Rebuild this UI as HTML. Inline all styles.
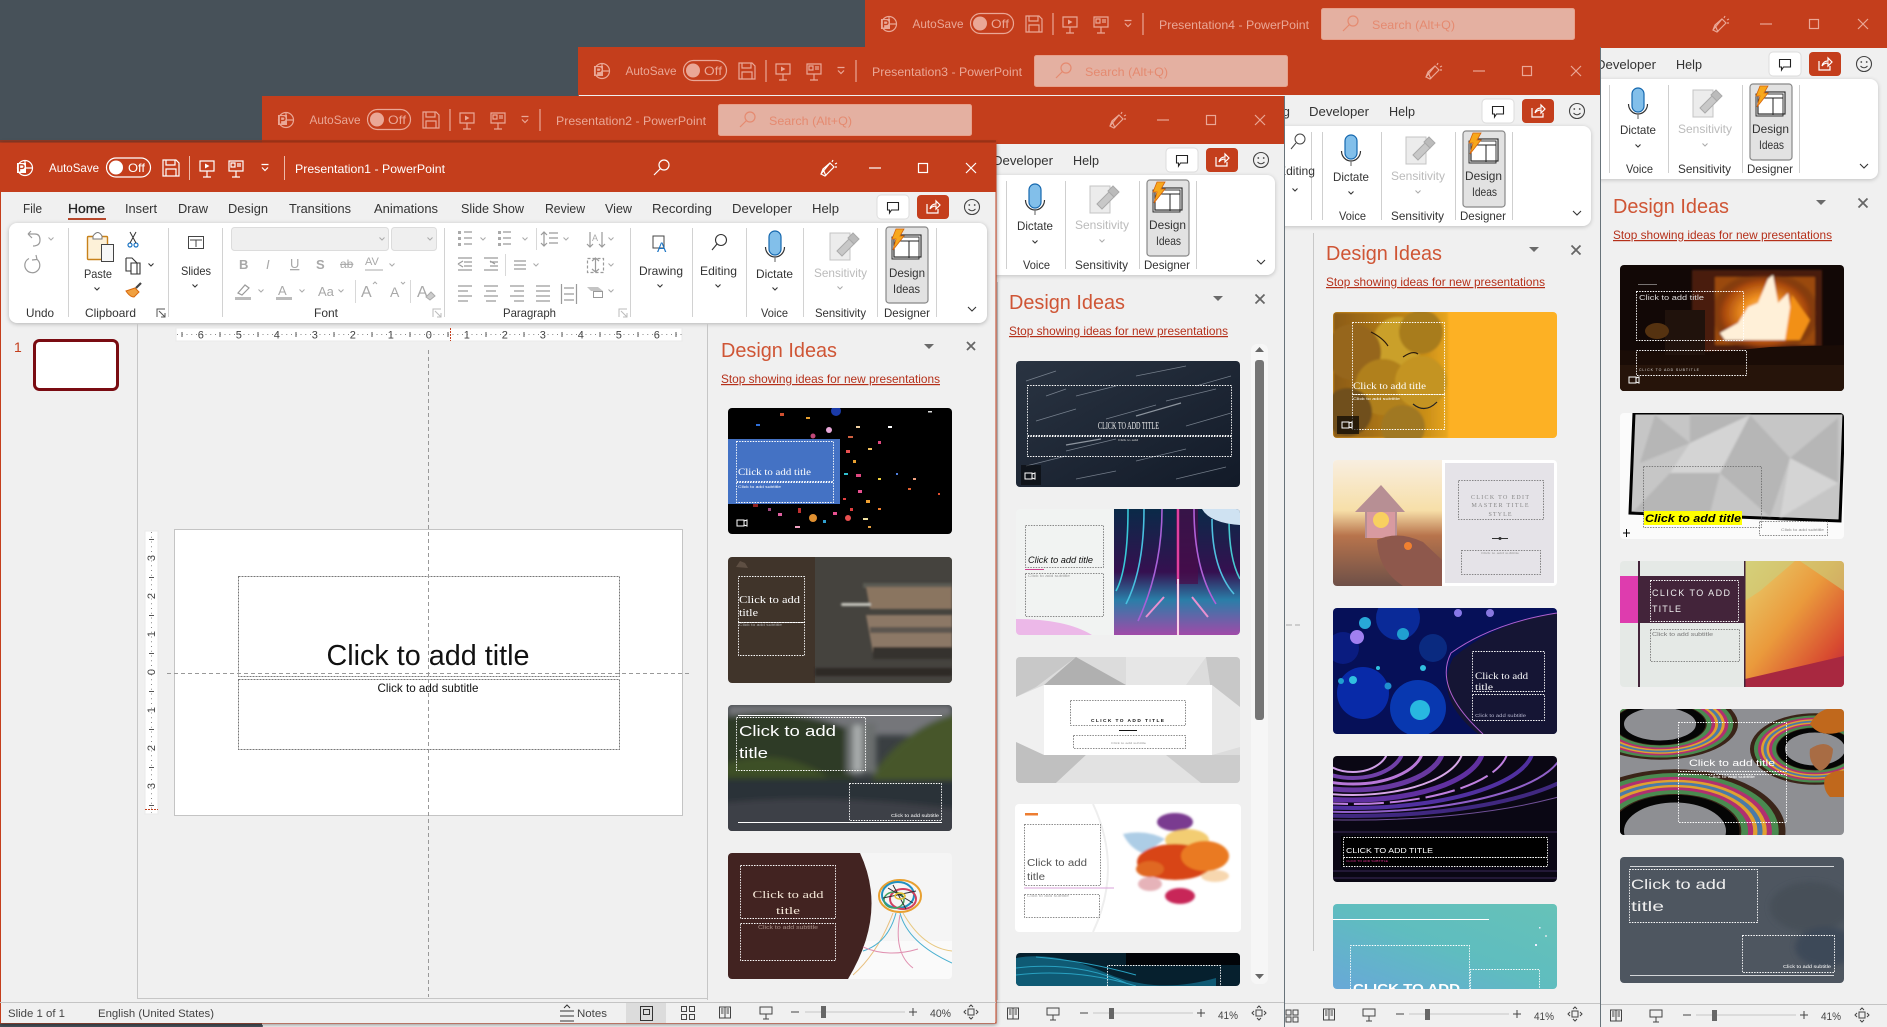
<!DOCTYPE html>
<html><head><meta charset="utf-8"><title>PowerPoint</title>
<style>
html,body{margin:0;padding:0;width:1887px;height:1027px;background:#475159;overflow:hidden}
svg{display:block;font-family:"Liberation Sans",sans-serif}
.i{fill:none;stroke:currentColor;stroke-width:1.2}
.g{fill:none;stroke:#9a9a9a;stroke-width:1.2}
.k{fill:none;stroke:#333;stroke-width:1.1}
.tab{font-size:13px;fill:#333}
.lab{font-size:12px;fill:#333}
.hd{font-size:20px;fill:#cf5535}
.lnk{font-size:12px;fill:#b5301a;text-decoration:underline}
.st{font-size:11px;fill:#444}
.tt{font-size:12px}
.ph{fill:none;stroke:#fff;stroke-width:.9;stroke-dasharray:1.5 1.2}
.pd{fill:none;stroke:#666;stroke-width:.8;stroke-dasharray:1.5 1.2}
.w{fill:#fff}
</style></head><body>
<svg width="1887" height="1027" viewBox="0 0 1887 1027" xmlns="http://www.w3.org/2000/svg">
<defs>
<filter id="b1" x="-20%" y="-20%" width="140%" height="140%"><feGaussianBlur stdDeviation="1"/></filter>
<filter id="b3" x="-20%" y="-20%" width="140%" height="140%"><feGaussianBlur stdDeviation="3"/></filter>
<clipPath id="tc"><rect width="224" height="126" rx="4"/></clipPath>
<clipPath id="tcs"><rect width="224" height="33" rx="4"/></clipPath>
<clipPath id="tcm"><rect width="224" height="85" rx="4"/></clipPath>
<clipPath id="tc2"><rect width="226" height="128" rx="4"/></clipPath>
<radialGradient id="fire" cx=".5" cy=".5" r=".5"><stop offset="0" stop-color="#ffd890"/><stop offset=".4" stop-color="#f09020"/><stop offset=".75" stop-color="#a8480c"/><stop offset="1" stop-color="#3a1505" stop-opacity="0"/></radialGradient>
<linearGradient id="neon" x1="0" y1="0" x2="0" y2="1"><stop offset="0" stop-color="#0a2a48"/><stop offset=".5" stop-color="#351050"/><stop offset=".72" stop-color="#2a7ea8"/><stop offset="1" stop-color="#a04aa8"/></linearGradient>
<linearGradient id="chalk" x1="0" y1="0" x2="1" y2="1"><stop offset="0" stop-color="#2a3442"/><stop offset="1" stop-color="#121a28"/></linearGradient>
<linearGradient id="teal" x1="0" y1="1" x2="1" y2="0"><stop offset="0" stop-color="#68a8d8"/><stop offset=".5" stop-color="#5fbdbf"/><stop offset="1" stop-color="#66c2b8"/></linearGradient>
<linearGradient id="paint" x1="0" y1="0" x2="1" y2="1"><stop offset="0" stop-color="#e8d070"/><stop offset=".45" stop-color="#ea9a3c"/><stop offset=".8" stop-color="#d84a30"/><stop offset="1" stop-color="#b82040"/></linearGradient>
<linearGradient id="sunset" x1="0" y1="0" x2="0" y2="1"><stop offset="0" stop-color="#f8eee0"/><stop offset=".4" stop-color="#f7dfa8"/><stop offset=".6" stop-color="#b8744c"/><stop offset="1" stop-color="#6e5048"/></linearGradient>
<linearGradient id="balls" x1="0" y1="0" x2="1" y2="0"><stop offset="0" stop-color="#8a5a16"/><stop offset=".8" stop-color="#c98e18"/><stop offset="1" stop-color="#e8a61e"/></linearGradient>

<g id="logo"><circle r="7.5" class="i" stroke-width="1.4"/><path d="M0-7.5V0H7.5" class="i"/><rect x="-8" y="-5" width="9" height="10" fill="currentColor"/><path d="M-5.5 3.5V-3.2H-3Q-1 -3.2 -1 -1.4T-3 .5H-5.5" fill="none" stroke="#c43e1c" stroke-width="1.3"/></g>
<g id="save"><path d="M-8-8H5L8-5V8H-8ZM-5-8V-3H4V-8M-5 8V1H5V8" class="i"/></g>
<g id="sh1"><path d="M-7-7H7V3H-7ZM0 3V9M-4 9H4M-7-7H7" class="i"/><path d="M-2-4.5L2.5-2-2 .5Z" fill="currentColor"/></g>
<g id="sh2"><path d="M-7-7H7V3H-7ZM0 3V9M-4 9H4M-5-5H-1V-1H-5ZM1-4H5M1-2H5" class="i"/></g>
<g id="qat"><path d="M-3.5-3.5H3.5M-3-.5L0 2.5 3-.5" class="i"/></g>
<g id="feat"><path d="M-7 6L-3 8 6-1 2-5ZM-7 6L-5 1 2-5M4-6L5-8M7-4L9-5M7-1H9M-5 1L-2 8" class="i"/></g>
<g id="srch"><circle cx="3" cy="-3" r="5" class="i"/><path d="M-.5.5L-7 7" class="i"/></g>
<g id="mn"><path d="M-6 0H6" class="i"/></g>
<g id="mx"><rect x="-4.5" y="-4.5" width="9" height="9" class="i"/></g>
<g id="cl"><path d="M-5-5L5 5M5-5L-5 5" class="i"/></g>
<g id="cmt"><rect x="-16" y="-12" width="32" height="24" rx="4" fill="#fff" stroke="#ddd"/><path d="M-5.500-4.5H5.500V3H-1.5L-3.500 6V3H-5.500Z" fill="none" stroke="#222" stroke-width="1.1"/></g>
<g id="shr"><rect x="-16" y="-12" width="32" height="24" rx="4" fill="#c43e1c"/><path d="M-6-3V6H5V2M-3 2Q-2-3 3-3V-6L7-2 3 2V-1Q-1-1-3 2" fill="none" stroke="#fff" stroke-width="1.2"/></g>
<g id="sml"><circle r="7.5" fill="none" stroke="#444" stroke-width="1.1"/><circle cx="-2.7" cy="-2" r=".9" fill="#444"/><circle cx="2.7" cy="-2" r=".9" fill="#444"/><path d="M-3.5 2Q0 5.5 3.5 2" fill="none" stroke="#444" stroke-width="1"/></g>
<g id="mic"><rect x="-6" y="0" width="12" height="24" rx="6" fill="#82bfea" stroke="#1467ae" stroke-width="1.2"/><path d="M-9.5 16A9.5 10 0 0 0 9.5 16" fill="none" stroke="#333" stroke-width="1.2"/><path d="M0 26V31" stroke="#777" stroke-width="1.2"/></g>
<g id="sns"><rect x="0" y="2" width="20" height="27" fill="#ececec" stroke="#c4c4c4"/><path d="M7 20L19 8 24 13 12 25Z" fill="#c8c8c8" stroke="#aaa"/><path d="M18 7L23 2 29 8 24 13Z" fill="#bbb" stroke="#aaa"/></g>
<g id="dsn"><rect x="-21" y="-38" width="42" height="76" rx="3" fill="#e2e2e2" stroke="#888" stroke-width="1.2"/><rect x="-13" y="-30" width="27" height="22" fill="#fff" stroke="#222" stroke-width="1.1"/><rect x="-15" y="-28" width="27" height="22" fill="none" stroke="#222" stroke-width=".9"/><path d="M-12-24H12M2-24V-7" stroke="#222" fill="none"/><path d="M-11-36H-3L-7-29H-3L-14-15-11-26H-15Z" fill="#f7a81c" stroke="#d7640c" stroke-width=".8"/></g>
<g id="chv"><path d="M-4-2L0 2 4-2" fill="none" stroke="#333" stroke-width="1.1"/></g>
<g id="cv2"><path d="M-2.5-1.5L0 1 2.5-1.5" fill="none" stroke="#333" stroke-width="1.1"/></g>
<g id="cvg"><path d="M-2.5-1.5L0 1 2.5-1.5" fill="none" stroke="#aaa" stroke-width="1"/></g>
<g id="bk"><path d="M0-5H5.5V6H0ZM0-5H-5.5V6H0M-4-3H-1.5M-4-1H-1.5M-4 1H-1.5M1.5-3H4M1.5-1H4M1.5 1H4" fill="none" stroke="#444" stroke-width="1"/></g>
<g id="ss"><path d="M-6-5H6V2H-6ZM0 2V7M-3 7H3" fill="none" stroke="#444" stroke-width="1"/></g>
<g id="ft"><path d="M-3-3H3V3H-3ZM-5-2L-7 0-5 2M5-2L7 0 5 2M-2-5L0-7 2-5M-2 5L0 7 2 5" fill="none" stroke="#444" stroke-width="1"/></g>
<g id="ring"><circle r="50" fill="none" stroke="#3a2418" stroke-width="30"/><circle r="50" fill="none" stroke="#4a8a50" stroke-width="22"/><circle r="50" fill="none" stroke="#b03070" stroke-width="14"/><circle r="50" fill="none" stroke="#e0a030" stroke-width="8"/><circle r="50" fill="none" stroke="#4a7aa8" stroke-width="3"/><circle r="34" fill="#8e8f93" stroke="#050505" stroke-width="8"/></g>

<g id="bw">
<rect width="1022" height="48" fill="#c43e1c"/>
<use href="#logo" x="24" y="24"/>
<rect x="105.500" y="13.500" width="43" height="20" rx="10" class="i"/><circle cx="115" cy="23.500" r="7" fill="currentColor"/>
<use href="#save" x="169" y="24"/><path d="M188 13V35M278 13V35" class="i"/>
<use href="#sh1" x="205" y="24"/><use href="#sh2" x="236" y="24"/><use href="#qat" x="263" y="24"/>
<rect x="456.500" y="8.500" width="253" height="31" rx="2" fill="#e4b0a1" stroke="#e7a08b"/>
<use href="#srch" x="485" y="24" color="#e58a70"/>
<use href="#feat" x="855" y="24"/><use href="#mn" x="901" y="24"/><use href="#mx" x="949" y="24"/><use href="#cl" x="998" y="24"/>
<use href="#cmt" x="920" y="64"/><use href="#shr" x="960" y="64"/><use href="#sml" x="999" y="64"/>
<rect x="9" y="79" width="1004" height="100" rx="8" fill="#fff" style="filter:drop-shadow(0 1px 2px rgba(0,0,0,.2))"/>
<path d="M744.500 85V173M803.500 85V173M877.500 85V173M934.500 85V173" stroke="#cfcfcf"/>
<use href="#mic" x="773" y="88"/><use href="#sns" x="828" y="88"/><use href="#dsn" x="906" y="122"/>
<use href="#chv" x="999" y="166"/><use href="#cv2" x="773" y="146"/><use href="#cvg" x="840" y="145"/><use href="#cv2" x="717" y="143"/>
<path d="M733.500 85V173" stroke="#cfcfcf"/>
<path d="M735.500 186V904" stroke="#c8c8c8"/>
<path d="M951 200H961L956 205Z" fill="#6a6a6a"/><path d="M993.500 198.500L1002.500 207.500M1002.500 198.500L993.500 207.500" stroke="#666" stroke-width="1.800"/>
</g>
<g id="bs">
<rect width="1022" height="23" fill="#f0f0f0"/><path d="M0 .5H1022" stroke="#c4c4c4"/>
<use href="#bk" x="751" y="11"/><use href="#ss" x="791" y="11"/>
<path d="M818 11H826M935 11H943M939 7V15" stroke="#444"/><path d="M831 11H931" stroke="#c6c6c6"/><rect x="847" y="6" width="5" height="11" fill="#666"/>
<use href="#ft" x="997" y="11"/>
</g>
</defs>

<rect width="1887" height="1027" fill="#475159"/>

<!-- WINDOW 4 -->
<g transform="translate(865,0)" color="#eaa796">
<rect x=".5" y="0" width="1022" height="1027" fill="#f0f0f0"/><path d="M.5 0V1027" stroke="#68737a"/>
<use href="#bw"/><use href="#bs" y="1004"/>
<g fill="#eaa796" class="tt">
<text x="47.500" y="28" textLength="51" lengthAdjust="spacingAndGlyphs">AutoSave</text>
<text x="126" y="28" textLength="18" lengthAdjust="spacingAndGlyphs">Off</text>
<text x="294" y="29" textLength="150" lengthAdjust="spacingAndGlyphs">Presentation4 - PowerPoint</text>
<text x="507" y="29" textLength="83" lengthAdjust="spacingAndGlyphs" fill="#e58a70">Search (Alt+Q)</text>
</g>
<text x="731" y="69" textLength="60" lengthAdjust="spacingAndGlyphs" class="tab">Developer</text>
<text x="811" y="69" textLength="26" lengthAdjust="spacingAndGlyphs" class="tab">Help</text>
<g class="lab"><text x="755" y="134" textLength="36" lengthAdjust="spacingAndGlyphs">Dictate</text>
<text x="813" y="133" textLength="54" lengthAdjust="spacingAndGlyphs" fill="#bbb">Sensitivity</text>
<text x="887" y="133" textLength="37" lengthAdjust="spacingAndGlyphs">Design</text><text x="894" y="149" textLength="25" lengthAdjust="spacingAndGlyphs">Ideas</text>
<text x="761" y="173" textLength="27" lengthAdjust="spacingAndGlyphs">Voice</text><text x="813" y="173" textLength="53" lengthAdjust="spacingAndGlyphs">Sensitivity</text><text x="882" y="173" textLength="46" lengthAdjust="spacingAndGlyphs">Designer</text></g>
<text x="748" y="213" textLength="116" lengthAdjust="spacingAndGlyphs" class="hd">Design Ideas</text>
<text x="748" y="239" textLength="219" lengthAdjust="spacingAndGlyphs" class="lnk">Stop showing ideas for new presentations</text>
<text x="956" y="1020" textLength="20" lengthAdjust="spacingAndGlyphs" class="st">41%</text>
</g>

<!-- WINDOW 3 -->
<g transform="translate(578,47)" color="#eaa796">
<rect x=".5" y="0" width="1022" height="980" fill="#f0f0f0"/><path d="M.5 0V980M1022.500 0V980" stroke="#68737a"/>
<use href="#bw"/><use href="#bs" y="956"/>
<g fill="#eaa796" class="tt">
<text x="47.500" y="28" textLength="51" lengthAdjust="spacingAndGlyphs">AutoSave</text>
<text x="126" y="28" textLength="18" lengthAdjust="spacingAndGlyphs">Off</text>
<text x="294" y="29" textLength="150" lengthAdjust="spacingAndGlyphs">Presentation3 - PowerPoint</text>
<text x="507" y="29" textLength="83" lengthAdjust="spacingAndGlyphs" fill="#e58a70">Search (Alt+Q)</text>
</g>
<text x="652" y="69" textLength="60" lengthAdjust="spacingAndGlyphs" class="tab">Recording</text>
<text x="731" y="69" textLength="60" lengthAdjust="spacingAndGlyphs" class="tab">Developer</text>
<text x="811" y="69" textLength="26" lengthAdjust="spacingAndGlyphs" class="tab">Help</text>
<g class="lab"><text x="700" y="128" textLength="37" lengthAdjust="spacingAndGlyphs">Editing</text>
<text x="755" y="134" textLength="36" lengthAdjust="spacingAndGlyphs">Dictate</text>
<text x="813" y="133" textLength="54" lengthAdjust="spacingAndGlyphs" fill="#bbb">Sensitivity</text>
<text x="887" y="133" textLength="37" lengthAdjust="spacingAndGlyphs">Design</text><text x="894" y="149" textLength="25" lengthAdjust="spacingAndGlyphs">Ideas</text>
<text x="761" y="173" textLength="27" lengthAdjust="spacingAndGlyphs">Voice</text><text x="813" y="173" textLength="53" lengthAdjust="spacingAndGlyphs">Sensitivity</text><text x="882" y="173" textLength="46" lengthAdjust="spacingAndGlyphs">Designer</text></g>
<circle cx="722" cy="92" r="5" fill="none" stroke="#444"/><path d="M718 96L713 102" stroke="#444"/>
<path d="M708 578H714M717 578H722" stroke="#aaa"/>
<text x="748" y="213" textLength="116" lengthAdjust="spacingAndGlyphs" class="hd">Design Ideas</text>
<text x="748" y="239" textLength="219" lengthAdjust="spacingAndGlyphs" class="lnk">Stop showing ideas for new presentations</text>
<path d="M708 963H713V968H708ZM715 963H720V968H715ZM708 970H713V975H708ZM715 970H720V975H715Z" fill="none" stroke="#444"/>
<text x="956" y="973" textLength="20" lengthAdjust="spacingAndGlyphs" class="st">41%</text>
</g>

<!-- WINDOW 2 -->
<g transform="translate(262,96)" color="#eaa796">
<rect x=".5" y="0" width="1022" height="931" fill="#f0f0f0"/><path d="M.5 0V931M1022.500 0V931" stroke="#68737a"/>
<use href="#bw"/><use href="#bs" y="906"/>
<g fill="#eaa796" class="tt">
<text x="47.500" y="28" textLength="51" lengthAdjust="spacingAndGlyphs">AutoSave</text>
<text x="126" y="28" textLength="18" lengthAdjust="spacingAndGlyphs">Off</text>
<text x="294" y="29" textLength="150" lengthAdjust="spacingAndGlyphs">Presentation2 - PowerPoint</text>
<text x="507" y="29" textLength="83" lengthAdjust="spacingAndGlyphs" fill="#e58a70">Search (Alt+Q)</text>
</g>
<text x="731" y="69" textLength="60" lengthAdjust="spacingAndGlyphs" class="tab">Developer</text>
<text x="811" y="69" textLength="26" lengthAdjust="spacingAndGlyphs" class="tab">Help</text>
<g class="lab"><text x="755" y="134" textLength="36" lengthAdjust="spacingAndGlyphs">Dictate</text>
<text x="813" y="133" textLength="54" lengthAdjust="spacingAndGlyphs" fill="#bbb">Sensitivity</text>
<text x="887" y="133" textLength="37" lengthAdjust="spacingAndGlyphs">Design</text><text x="894" y="149" textLength="25" lengthAdjust="spacingAndGlyphs">Ideas</text>
<text x="761" y="173" textLength="27" lengthAdjust="spacingAndGlyphs">Voice</text><text x="813" y="173" textLength="53" lengthAdjust="spacingAndGlyphs">Sensitivity</text><text x="882" y="173" textLength="46" lengthAdjust="spacingAndGlyphs">Designer</text></g>
<text x="747" y="213" textLength="116" lengthAdjust="spacingAndGlyphs" class="hd">Design Ideas</text>
<text x="747" y="239" textLength="219" lengthAdjust="spacingAndGlyphs" class="lnk">Stop showing ideas for new presentations</text>
<text x="956" y="923" textLength="20" lengthAdjust="spacingAndGlyphs" class="st">41%</text>
<rect x="989" y="248" width="17" height="640" rx="6" fill="#f6f6f6"/>
<rect x="993" y="264" width="9" height="360" rx="3" fill="#757575"/>
<path d="M997.500 251L1002 256H993Z" fill="#666"/><path d="M993 878H1002L997.500 883Z" fill="#666"/>
</g>

<!-- WINDOW 1 -->
<g>
<rect x="0" y="140" width="996" height="3" fill="#a03419" opacity=".8"/>
<rect x=".5" y="143" width="995.500" height="880" fill="#f0f0f0" stroke="#c43e1c" style="filter:drop-shadow(0 1px 2px rgba(0,0,0,.45))"/>
<rect x="0" y="143" width="996" height="49" fill="#c43e1c"/>
<g color="#fff">
<use href="#logo" x="25" y="168"/>
<text x="49" y="172" textLength="50" lengthAdjust="spacingAndGlyphs" fill="#fff" class="tt">AutoSave</text>
<rect x="106.500" y="158" width="44" height="19" rx="9.500" class="i"/><circle cx="116" cy="167.500" r="7" fill="#fff"/>
<text x="128" y="172" textLength="17" lengthAdjust="spacingAndGlyphs" fill="#fff" class="tt">Off</text>
<use href="#save" x="171" y="168"/>
<path d="M189.500 156V180M284.500 156V180" stroke="#eeb9a8"/>
<use href="#sh1" x="207" y="168"/><use href="#sh2" x="236" y="168"/><use href="#qat" x="265" y="168"/>
<text x="295" y="173" textLength="150" lengthAdjust="spacingAndGlyphs" fill="#fff" class="tt">Presentation1 - PowerPoint</text>
<use href="#srch" x="661" y="168"/><use href="#feat" x="828" y="168"/><use href="#mn" x="875" y="168"/><use href="#mx" x="923" y="168"/><use href="#cl" x="971" y="168"/>
</g>
<g class="tab">
<text x="23" y="213" textLength="19" lengthAdjust="spacingAndGlyphs">File</text>
<text x="68" y="213" textLength="37" lengthAdjust="spacingAndGlyphs" fill="#222" stroke="#222" stroke-width=".3">Home</text>
<text x="125" y="213" textLength="32" lengthAdjust="spacingAndGlyphs">Insert</text>
<text x="178" y="213" textLength="30" lengthAdjust="spacingAndGlyphs">Draw</text>
<text x="228" y="213" textLength="40" lengthAdjust="spacingAndGlyphs">Design</text>
<text x="289" y="213" textLength="62" lengthAdjust="spacingAndGlyphs">Transitions</text>
<text x="374" y="213" textLength="64" lengthAdjust="spacingAndGlyphs">Animations</text>
<text x="461" y="213" textLength="63" lengthAdjust="spacingAndGlyphs">Slide Show</text>
<text x="545" y="213" textLength="40" lengthAdjust="spacingAndGlyphs">Review</text>
<text x="605" y="213" textLength="27" lengthAdjust="spacingAndGlyphs">View</text>
<text x="652" y="213" textLength="60" lengthAdjust="spacingAndGlyphs">Recording</text>
<text x="732" y="213" textLength="60" lengthAdjust="spacingAndGlyphs">Developer</text>
<text x="812" y="213" textLength="27" lengthAdjust="spacingAndGlyphs">Help</text>
</g>
<rect x="68" y="218" width="38" height="2" fill="#b7472a"/>
<use href="#cmt" x="893" y="207"/><use href="#shr" x="933" y="207"/><use href="#sml" x="972" y="207"/>

<rect x="9" y="223" width="978" height="100" rx="8" fill="#fff" style="filter:drop-shadow(0 1px 2px rgba(0,0,0,.25))"/>
<path d="M68.500 228V317M168.500 228V317M222.500 228V317M444.500 228V317M630.500 228V317M692.500 228V317M746.500 228V317M803.500 228V317M877.500 228V317M936.500 228V317" stroke="#d2d2d2"/>
<!-- undo / redo -->
<path d="M28 234H35Q40 234 40 240T33 246M28 234L31 231M28 234L32 238" class="g"/><use href="#cvg" x="51" y="239"/>
<path d="M36.500 259A7.500 7.500 0 1 1 29 258.500M36 255L37 259.500 32 260" class="g"/>
<!-- clipboard -->
<rect x="87.500" y="236.500" width="20" height="23" rx="1" fill="#fdf1d8" stroke="#c8811a" stroke-width="1.400"/>
<path d="M93 236Q98 229 102 236V239H93Z" fill="#fff" stroke="#777"/>
<rect x="101.500" y="244.500" width="12" height="17" fill="#f7f7f7" stroke="#444"/>
<use href="#cv2" x="97" y="289"/>
<circle cx="130" cy="245" r="2" fill="none" stroke="#1b74c4" stroke-width="1.200"/><circle cx="136" cy="245" r="2" fill="none" stroke="#1b74c4" stroke-width="1.200"/><path d="M130 243L136 232M136 243L130 232" stroke="#333" stroke-width="1"/>
<path d="M126 258H132L137 263V274H131M126 258V271H131M131 263H140V274H131Z" class="k"/><use href="#cv2" x="151" y="265"/>
<path d="M126 291L135 288 139 292 134 297Q130 297 126 291Z" fill="#f0a040" stroke="#d7680c"/><path d="M136 288L141 283" stroke="#444" stroke-width="2.200"/>
<path d="M157 317V309H165M165 317L159 311M165 313V317H161" fill="none" stroke="#555"/>
<!-- slides -->
<rect x="188.500" y="236.500" width="15" height="12" fill="none" stroke="#444"/><path d="M190 240H202M196 240V247" stroke="#444"/>
<use href="#cv2" x="195" y="286"/>
<!-- font boxes -->
<rect x="231.500" y="227.500" width="157" height="23" rx="3" fill="#efefef" stroke="#dcdcdc"/>
<rect x="391.500" y="227.500" width="45" height="23" rx="3" fill="#efefef" stroke="#dcdcdc"/>
<use href="#cvg" x="382" y="239"/><use href="#cvg" x="430" y="239"/>
<g fill="#a8a8a8" font-size="13">
<text x="239" y="269" font-weight="bold">B</text><text x="266" y="269" font-style="italic">I</text><text x="290" y="268" text-decoration="underline">U</text><text x="316" y="269" font-weight="bold">S</text><text x="340" y="268" font-size="12" text-decoration="line-through">ab</text><text x="365" y="265" font-size="11">AV</text>
<text x="318" y="296" font-size="13">Aa</text><text x="361" y="297" font-size="16">A</text><text x="390" y="297" font-size="14">A</text><text x="417" y="297" font-size="16">A</text><text x="278" y="295" font-size="13">A</text>
</g>
<path d="M365 270H383M373 284L375 282 377 284M401 282L403 284 405 282" stroke="#aaa" fill="none"/><path d="M426 297L431 292 435 296 430 300Z" fill="#ccc" stroke="#aaa"/>
<use href="#cvg" x="392" y="265"/><use href="#cvg" x="261" y="291"/><use href="#cvg" x="302" y="291"/><use href="#cvg" x="341" y="291"/>
<rect x="235" y="297" width="16" height="3" fill="#bbb"/><rect x="276" y="297" width="16" height="3" fill="#bbb"/>
<path d="M238 293L245 285 249 288 242 295Z" class="g"/>
<path d="M355.500 280V303M410.500 280V303" stroke="#d8d8d8"/>
<!-- paragraph -->
<g class="g">
<path d="M464 232H472M464 238H472M464 244H472M503 232H511M503 238H511M503 244H511M549 233H558M549 238H558M549 243H558M544 232V246M541 235L544 232 547 235M541 243L544 246 547 243"/>
<path d="M458 258H472M464 262H472M464 266H472M458 270H472M484 258H498M490 262H498M490 266H498M484 270H498M514 261H526M514 265H526M514 269H526M458 264L463 261M458 264L463 267M495 264L490 261"/>
<path d="M458 286H472M458 291H468M458 296H472M458 301H468M484 286H498M486 291H496M484 296H498M486 301H496M510 286H524M514 291H524M510 296H524M514 301H524M536 286H550M536 291H550M536 296H550M536 301H550"/>
<path d="M561.500 284V304M576.500 284V304M564 288H574M564 294H574M564 300H574"/>
<path d="M587.500 258.500H603.500V272.500H587.500Z" stroke-dasharray="3 2"/><path d="M595.500 258V272M592 261L595.500 258 599 261M592 269L595.500 272 599 269"/>
<path d="M590 232V247M587 244L590 247 593 244M602 232V247M599 244L602 247 605 244"/>
</g>
<text x="592" y="241" font-size="9" fill="#aaa">A</text>
<path d="M587 287H598L603 291H591Z" fill="#c4c4c4"/><rect x="593.500" y="291.500" width="9" height="6" fill="#fff" stroke="#999"/>
<rect x="458" y="231" width="3" height="3" fill="#aaa"/><rect x="458" y="237" width="3" height="3" fill="#aaa"/><rect x="458" y="243" width="3" height="3" fill="#aaa"/>
<rect x="498" y="231" width="3" height="3" fill="#aaa"/><rect x="498" y="237" width="3" height="3" fill="#aaa"/><rect x="498" y="243" width="3" height="3" fill="#aaa"/>
<use href="#cvg" x="483" y="239"/><use href="#cvg" x="525" y="239"/><use href="#cvg" x="566" y="239"/><use href="#cvg" x="611" y="239"/><use href="#cvg" x="536" y="265"/><use href="#cvg" x="611" y="265"/><use href="#cvg" x="611" y="291"/>
<path d="M505.500 254V276M536.500 228V250" stroke="#d8d8d8"/>
<path d="M433 317V309H441M441 317L435 311M441 313V317H437M619 317V309H627M627 317L621 311M627 313V317H623" fill="none" stroke="#bbb"/>
<path d="M653 236H664V248H653Z" fill="#fff" stroke="#444"/><text x="657" y="252" font-size="14" fill="#1b74c4">A</text>
<use href="#cv2" x="660" y="286"/><use href="#cv2" x="718" y="286"/>
<circle cx="721" cy="240" r="5.500" class="k"/><path d="M717 244L712 250" class="k"/>
<use href="#mic" x="775" y="231"/><use href="#cv2" x="775" y="289"/>
<use href="#sns" x="830" y="231"/><use href="#cvg" x="840" y="288"/>
<use href="#dsn" x="907" y="265"/><use href="#chv" x="972" y="309"/>
<g class="lab">
<text x="84" y="278" textLength="28" lengthAdjust="spacingAndGlyphs">Paste</text>
<text x="181" y="275" textLength="30" lengthAdjust="spacingAndGlyphs">Slides</text>
<text x="639" y="275" textLength="44" lengthAdjust="spacingAndGlyphs">Drawing</text>
<text x="700" y="275" textLength="37" lengthAdjust="spacingAndGlyphs">Editing</text>
<text x="756" y="278" textLength="37" lengthAdjust="spacingAndGlyphs">Dictate</text>
<text x="814" y="277" textLength="53" lengthAdjust="spacingAndGlyphs" fill="#bbb">Sensitivity</text>
<text x="889" y="277" textLength="36" lengthAdjust="spacingAndGlyphs">Design</text>
<text x="893" y="293" textLength="27" lengthAdjust="spacingAndGlyphs">Ideas</text>
<text x="26" y="317" textLength="28" lengthAdjust="spacingAndGlyphs">Undo</text>
<text x="85" y="317" textLength="51" lengthAdjust="spacingAndGlyphs">Clipboard</text>
<text x="314" y="317" textLength="24" lengthAdjust="spacingAndGlyphs">Font</text>
<text x="503" y="317" textLength="53" lengthAdjust="spacingAndGlyphs">Paragraph</text>
<text x="761" y="317" textLength="27" lengthAdjust="spacingAndGlyphs">Voice</text>
<text x="815" y="317" textLength="51" lengthAdjust="spacingAndGlyphs">Sensitivity</text>
<text x="884" y="317" textLength="46" lengthAdjust="spacingAndGlyphs">Designer</text>
</g>

<!-- panes -->
<path d="M137.500 324V998M707.500 324V1000" stroke="#c6c6c6"/><path d="M137 998.500H708" stroke="#c6c6c6"/>
<text x="14" y="352" font-size="14" fill="#c43e1c">1</text>
<rect x="34.500" y="340.500" width="83" height="49" rx="5" fill="#fff" stroke="#7a0c12" stroke-width="3"/>

<!-- h ruler -->
<rect x="176" y="328" width="506" height="13" fill="#fff" stroke="#eaeaea"/>
<path d="M177 334.500H682" stroke="#888" stroke-width="1" stroke-dasharray="1 3.750"/>
<path d="M181.500 334.500H682" stroke="#555" stroke-width="5" stroke-dasharray="1 37"/>
<g font-size="11" fill="#444" text-anchor="middle">
<text x="200.800" y="338.500">6</text><text x="238.800" y="338.500">5</text><text x="276.800" y="338.500">4</text><text x="314.800" y="338.500">3</text><text x="352.800" y="338.500">2</text><text x="390.800" y="338.500">1</text><text x="428.800" y="338.500">0</text><text x="466.800" y="338.500">1</text><text x="504.800" y="338.500">2</text><text x="542.800" y="338.500">3</text><text x="580.800" y="338.500">4</text><text x="618.800" y="338.500">5</text><text x="656.800" y="338.500">6</text>
</g>
<path d="M450.500 328V341" stroke="#c43e1c" stroke-dasharray="2 1"/>
<!-- v ruler -->
<rect x="145" y="531" width="13" height="283" fill="#fff" stroke="#eaeaea"/>
<path d="M151.500 532V813" stroke="#888" stroke-dasharray="1 3.750"/>
<path d="M151.500 539V813" stroke="#555" stroke-width="5" stroke-dasharray="1 37"/>
<g font-size="11" fill="#444" text-anchor="middle">
<text transform="translate(155,558) rotate(-90)">3</text><text transform="translate(155,596) rotate(-90)">2</text><text transform="translate(155,634) rotate(-90)">1</text><text transform="translate(155,672) rotate(-90)">0</text><text transform="translate(155,710) rotate(-90)">1</text><text transform="translate(155,748) rotate(-90)">2</text><text transform="translate(155,786) rotate(-90)">3</text>
</g>
<path d="M145 809.500H158" stroke="#c43e1c" stroke-dasharray="2 1"/>

<!-- slide -->
<rect x="174.500" y="529.500" width="508" height="286" fill="#fff" stroke="#c4c4c4"/>
<rect x="238.500" y="576.500" width="381" height="100" fill="none" stroke="#777" stroke-dasharray="2 1"/>
<rect x="238.500" y="679.500" width="381" height="70" fill="none" stroke="#777" stroke-dasharray="2 1"/>
<text x="428" y="665" text-anchor="middle" font-size="29" fill="#111" textLength="203" lengthAdjust="spacingAndGlyphs">Click to add title</text>
<text x="428" y="692" text-anchor="middle" font-size="12" fill="#111" textLength="101" lengthAdjust="spacingAndGlyphs">Click to add subtitle</text>
<path d="M428.500 350V997" stroke="#999" stroke-dasharray="4 3"/>
<path d="M167 673.500H690" stroke="#999" stroke-dasharray="4 3"/>

<!-- design pane -->
<text x="721" y="357" textLength="116" lengthAdjust="spacingAndGlyphs" class="hd">Design Ideas</text>
<text x="721" y="383" textLength="219" lengthAdjust="spacingAndGlyphs" class="lnk">Stop showing ideas for new presentations</text>
<path d="M924 344H934L929 349Z" fill="#6a6a6a"/><path d="M967 342L975 350M975 342L967 350" stroke="#666" stroke-width="1.800"/>

<!-- status 1 -->
<rect x="1" y="1002" width="994" height="21" fill="#f0f0f0"/><path d="M0 1002.500H996" stroke="#c4c4c4"/>
<rect x="626" y="1003" width="40" height="20" fill="#dcdcdc"/>
<g class="st">
<text x="8" y="1017" textLength="57" lengthAdjust="spacingAndGlyphs">Slide 1 of 1</text>
<text x="98" y="1017" textLength="116" lengthAdjust="spacingAndGlyphs">English (United States)</text>
<text x="577" y="1017" textLength="30" lengthAdjust="spacingAndGlyphs">Notes</text>
<text x="930" y="1017" textLength="21" lengthAdjust="spacingAndGlyphs">40%</text>
</g>
<path d="M560 1011H574M560 1016H574M560 1021H574M564 1008L567 1005 570 1008" fill="none" stroke="#333"/>
<rect x="640.500" y="1006.500" width="12" height="14" fill="none" stroke="#333"/><rect x="643.500" y="1009.500" width="6" height="5" fill="none" stroke="#333"/>
<path d="M681.500 1006.500H686.500V1011.500H681.500ZM689.500 1006.500H694.500V1011.500H689.500ZM681.500 1014.500H686.500V1019.500H681.500ZM689.500 1014.500H694.500V1019.500H689.500Z" fill="none" stroke="#444"/>
<use href="#bk" x="725" y="1012"/><use href="#ss" x="766" y="1012"/>
<path d="M791 1012H799M909 1012H917M913 1008V1016" stroke="#444"/><path d="M805 1012H905" stroke="#c6c6c6"/><rect x="821" y="1006" width="5" height="12" fill="#666"/>
<use href="#ft" x="971" y="1012"/>
</g>

<!-- THUMBS: WINDOW 1 -->
<svg x="728" y="408" width="224" height="126"><g clip-path="url(#tc)">
<rect width="224" height="126" fill="#000"/>
<g><circle cx="108" cy="3" r="5" fill="#1a3aa8"/><circle cx="101" cy="22" r="3" fill="#e8a8d8"/><circle cx="85" cy="28" r="2.500" fill="#c04878"/><rect x="52" y="5" width="4" height="3" fill="#d05030"/><rect x="78" y="9" width="4" height="2" fill="#e8a030"/><rect x="28" y="16" width="4" height="2" fill="#3070d8"/><rect x="120" y="28" width="5" height="2" fill="#d06040"/><rect x="128" y="18" width="4" height="2" fill="#f0d0a0"/><rect x="118" y="42" width="4" height="3" fill="#e85050"/><rect x="125" y="52" width="3" height="3" fill="#e8a030"/><rect x="116" y="65" width="4" height="2" fill="#30c0d0"/><rect x="128" y="66" width="5" height="3" fill="#e04880"/><rect x="140" y="40" width="4" height="2" fill="#f0c060"/><rect x="150" y="33" width="3" height="3" fill="#e04880"/><rect x="160" y="18" width="4" height="2" fill="#fff"/><rect x="150" y="70" width="3" height="2" fill="#f0d040"/><rect x="115" y="90" width="3" height="2" fill="#e04040"/><rect x="130" y="82" width="4" height="3" fill="#e85090"/><rect x="138" y="92" width="4" height="3" fill="#f0a030"/><rect x="122" y="100" width="3" height="3" fill="#e04040"/><rect x="105" y="104" width="4" height="3" fill="#e85090"/><circle cx="85" cy="110" r="4" fill="#e09030"/><rect x="70" y="100" width="3" height="5" fill="#c03030"/><circle cx="120" cy="110" r="3" fill="#e85050"/><rect x="135" y="110" width="5" height="2" fill="#f0e0a0"/><rect x="95" y="112" width="3" height="3" fill="#30a0d0"/><rect x="50" y="105" width="4" height="3" fill="#e060a0"/><rect x="40" y="100" width="3" height="3" fill="#a04880"/><rect x="150" y="100" width="3" height="2" fill="#f08030"/><rect x="140" y="118" width="3" height="2" fill="#e8a040"/><rect x="67" y="118" width="5" height="2" fill="#f0a0c0"/><rect x="180" y="80" width="3" height="2" fill="#e06030"/><rect x="185" y="70" width="3" height="2" fill="#f0a080"/><rect x="168" y="65" width="2" height="2" fill="#5080e0"/><rect x="210" y="85" width="2" height="2" fill="#e05030"/><rect x="200" y="3" width="4" height="1.500" fill="#ddd"/><rect x="25" y="95" width="5" height="4" fill="#902020"/></g>
<rect y="31" width="112" height="65" fill="#4472c4"/>
<rect x="8.500" y="33.500" width="97" height="40" class="ph"/><rect x="8.500" y="74.500" width="97" height="20" class="ph"/>
<text x="10" y="67" font-family="Liberation Serif" font-size="9.500" class="w" textLength="73" lengthAdjust="spacingAndGlyphs">Click to add title</text>
<text x="10" y="80" font-size="4" class="w" textLength="43" lengthAdjust="spacingAndGlyphs">Click to add subtitle</text>
<rect x="9" y="112" width="7" height="6" fill="none" stroke="#fff"/><path d="M16 113L19 112V118L16 117" fill="none" stroke="#fff"/>
</g></svg>

<svg x="728" y="557" width="224" height="126"><g clip-path="url(#tc)">
<rect width="224" height="126" fill="#40342a"/>
<rect x="87" width="137" height="126" fill="#45433e"/>
<g filter="url(#b1)">
<path d="M135 26H224V31H135Z" fill="#5a5a52"/><path d="M138 30H224V52H142Z" fill="#8a7560"/>
<path d="M138 58H224V96H145Z" fill="#8c7866"/><path d="M142 70H224V76H142Z" fill="#5d5650"/><path d="M145 90H224V102H145Z" fill="#34322e"/>
<rect x="113" y="46" width="30" height="3" fill="#c8c8c0" rx="2"/>
<path d="M87 115H224" stroke="#2e2c28" stroke-width="8"/>
</g>
<path d="M8 10L12 4 17 6 20 11Z" fill="#5e4f43"/>
<rect x="10.500" y="19.500" width="66" height="46" class="ph"/><rect x="10.500" y="65.500" width="66" height="33" class="ph"/>
<text x="11" y="46" font-family="Liberation Serif" font-size="11" class="w" textLength="61" lengthAdjust="spacingAndGlyphs">Click to add</text>
<text x="11" y="59" font-family="Liberation Serif" font-size="11" class="w" textLength="19" lengthAdjust="spacingAndGlyphs">title</text>
<text x="11" y="69" font-size="4" fill="#aaa" textLength="43" lengthAdjust="spacingAndGlyphs">Click to add subtitle</text>
</g></svg>

<svg x="728" y="705" width="224" height="126"><g clip-path="url(#tc)">
<rect width="224" height="126" fill="#3a3f42"/>
<g filter="url(#b3)">
<rect width="224" height="30" fill="#74767a"/>
<path d="M-5 12Q60 0 125 25V78H-5Z" fill="#2f3a28"/>
<path d="M-5 60Q50 40 100 72H-5Z" fill="#3e5028"/>
<path d="M145 68Q180 20 230 8V75H145Z" fill="#47572c"/>
<rect x="118" y="18" width="30" height="50" fill="#6c7070"/><rect x="125" y="20" width="9" height="48" fill="#a8acac"/>
<rect x="-5" y="75" width="234" height="55" fill="#2c3238"/><path d="M-5 98Q100 88 229 104V130H-5Z" fill="#3c4146"/>
</g>
<path d="M10 10.500H214M10 117.500H214" stroke="#fff"/>
<rect x="8.500" y="12.500" width="129" height="53" class="ph"/><rect x="121.500" y="78.500" width="92" height="37" class="ph"/>
<text x="11" y="31" font-size="15" class="w" textLength="97" lengthAdjust="spacingAndGlyphs">Click to add</text>
<text x="11" y="53" font-size="15" class="w" textLength="29" lengthAdjust="spacingAndGlyphs">title</text>
<text x="163" y="112" font-size="4.500" class="w" textLength="48" lengthAdjust="spacingAndGlyphs">Click to add subtitle</text>
</g></svg>

<svg x="728" y="853" width="224" height="126"><g clip-path="url(#tc)">
<rect width="224" height="126" fill="#f5f5f5"/><rect y="88" width="224" height="38" fill="#fafafa"/>
<path d="M0 0H132Q160 60 120 126H0Z" fill="#422321"/>
<g fill="none" stroke-width="1">
<ellipse cx="172" cy="43" rx="21" ry="16" stroke="#e8a030" stroke-width="2"/><ellipse cx="170" cy="42" rx="16" ry="13" stroke="#2090c0" stroke-width="2"/><ellipse cx="175" cy="46" rx="13" ry="10" stroke="#d04060" stroke-width="2"/><ellipse cx="166" cy="47" rx="10" ry="8" stroke="#40a060" stroke-width="1.500"/><path d="M160 35L185 50M155 45L188 38M165 32L178 56" stroke="#303030"/><ellipse cx="172" cy="43" rx="5" ry="3" stroke="#e8c030" stroke-width="1.500"/>
<path d="M165 60Q150 100 125 122" stroke="#e8c080"/><path d="M172 60Q180 90 224 110" stroke="#4ab0d0"/><path d="M175 60Q195 95 224 98" stroke="#e8c880"/><path d="M168 60Q160 90 135 98" stroke="#4ab0d0"/><path d="M172 62Q165 100 185 115" stroke="#e090b0"/><path d="M135 94Q160 105 190 96" stroke="#e090b0"/>
</g>
<rect x="12.500" y="12.500" width="95" height="53" class="ph"/><rect x="12.500" y="70.500" width="95" height="37" class="ph"/>
<text x="60" y="45" text-anchor="middle" font-family="Liberation Serif" font-size="10.500" fill="#f5e8d8" textLength="71" lengthAdjust="spacingAndGlyphs">Click to add</text>
<text x="60" y="61" text-anchor="middle" font-family="Liberation Serif" font-size="10.500" fill="#f5e8d8" textLength="24" lengthAdjust="spacingAndGlyphs">title</text>
<text x="60" y="76" text-anchor="middle" font-size="5" fill="#a89088" textLength="60" lengthAdjust="spacingAndGlyphs">Click to add subtitle</text>
</g></svg>

<!-- THUMBS: WINDOW 2 -->
<svg x="1016" y="361" width="224" height="126"><g clip-path="url(#tc)">
<rect width="224" height="126" fill="url(#chalk)"/>
<g stroke="#aeb8c4" stroke-width=".7" opacity=".6"><path d="M10 20L40 10M60 35L100 25M120 15L170 5M150 40L200 28M20 60L60 48M90 58L140 44M170 65L215 52M50 90L100 78M10 105L50 95M120 100L170 88M160 118L210 106M60 118L100 110M180 25L215 15M30 35L50 28"/></g>
<path d="M50 84L85 78M120 55L165 42" stroke="#d6dde4" stroke-width="1.200" opacity=".6"/>
<rect x="11.500" y="24.500" width="204" height="50" class="ph"/><rect x="11.500" y="75.500" width="204" height="20" class="ph"/>
<text x="82" y="68" font-family="Liberation Serif" font-size="10" fill="#eee" textLength="61" lengthAdjust="spacingAndGlyphs">CLICK TO ADD TITLE</text>
<text x="102" y="80" font-size="3" fill="#ccc" textLength="20" lengthAdjust="spacingAndGlyphs">Click to add</text>
<rect x="5" y="104" width="20" height="20" fill="#000" opacity=".5"/><rect x="9" y="112" width="7" height="6" fill="none" stroke="#fff"/><path d="M16 113L19 112V118L16 117" fill="none" stroke="#fff"/>
</g></svg>

<svg x="1016" y="509" width="224" height="126"><g clip-path="url(#tc)">
<rect width="224" height="126" fill="#f1f3f2"/>
<rect x="98" width="126" height="126" fill="url(#neon)"/>
<rect x="160" width="22" height="75" fill="#4a0c48" opacity=".7"/>
<g fill="none" stroke-width="1.600">
<path d="M112 0Q112 60 100 82" stroke="#38c8d8"/><path d="M128 0Q128 60 110 95" stroke="#48c0e0"/><path d="M146 0Q146 60 122 112" stroke="#a860d8"/><path d="M162 0V126" stroke="#e040a0" stroke-width="2.400"/>
<path d="M178 0Q178 60 200 95" stroke="#b060d8"/><path d="M196 10Q196 60 218 85" stroke="#50c0e0"/><path d="M213 10Q213 50 224 70" stroke="#48c8d0"/>
<path d="M148 88L130 108M176 88L192 108" stroke="#e890d0" stroke-width="2"/>
<path d="M162 70V126" stroke="#fff" stroke-width="1.500"/>
</g>
<path d="M186 0Q194 14 224 16V0Z" fill="#cfe2f2"/>
<path d="M0 110Q50 110 76 126H0Z" fill="#ecb8e8"/>
<rect x="9.500" y="16.500" width="78" height="42" class="pd"/><rect x="9.500" y="64.500" width="78" height="43" class="pd"/>
<text x="12" y="54" font-style="italic" font-size="9" fill="#111" textLength="65" lengthAdjust="spacingAndGlyphs">Click to add title</text>
<path d="M9 60.500H28" stroke="#d04090"/>
<text x="12" y="68" font-size="3.800" fill="#999" textLength="42" lengthAdjust="spacingAndGlyphs">Click to add subtitle</text>
</g></svg>

<svg x="1016" y="657" width="224" height="126"><g clip-path="url(#tc)">
<rect width="224" height="126" fill="#dcdcdc"/>
<path d="M0 0H60L20 30 0 40Z" fill="#c8c8c8"/><path d="M60 0L110 28H28Z" fill="#b0b0b0"/><path d="M110 0H190L170 28H110Z" fill="#e6e6e6"/><path d="M190 0H224V50L196 40Z" fill="#c8c8c8"/>
<path d="M0 40L28 28V98L0 85Z" fill="#f0f0f0"/><path d="M196 28L224 50V90L196 98Z" fill="#e8e8e8"/>
<path d="M0 85L28 98H70L40 126H0Z" fill="#c0c0c0"/><path d="M70 98H150L185 126H40Z" fill="#e2e2e2"/><path d="M150 98H224V126H185Z" fill="#cccccc"/>
<rect x="28" y="28" width="168" height="70" fill="#fff"/>
<rect x="54.500" y="43.500" width="115" height="25" class="pd"/><rect x="57.500" y="78.500" width="112" height="13" class="pd"/>
<text x="75" y="65" font-weight="bold" font-size="4.800" fill="#111" textLength="73" lengthAdjust="spacing">CLICK TO ADD TITLE</text>
<path d="M103 73.500H121" stroke="#111"/>
<text x="95" y="87" font-size="3" fill="#999" textLength="35" lengthAdjust="spacingAndGlyphs">Click to add subtitle</text>
</g></svg>

<svg x="1015" y="804" width="226" height="128"><g clip-path="url(#tc2)">
<rect width="226" height="128" fill="#fff"/>
<path d="M78 0Q108 64 78 128" fill="none" stroke="#eee" stroke-width="2"/>
<rect x="10" y="9" width="13" height="2.500" fill="#ed7d31"/>
<rect x="9.500" y="20.500" width="76" height="61" class="pd"/><rect x="9.500" y="90.500" width="75" height="23" class="pd"/>
<path d="M9 84H99" stroke="#d8a0d8"/>
<text x="12" y="62" font-size="10" fill="#555" textLength="60" lengthAdjust="spacingAndGlyphs">Click to add</text>
<text x="12" y="76" font-size="10" fill="#555" textLength="18" lengthAdjust="spacingAndGlyphs">title</text>
<text x="12" y="93" font-size="3.600" fill="#aaa" textLength="42" lengthAdjust="spacingAndGlyphs">Click to add subtitle</text>
<g filter="url(#b1)">
<path d="M108 30Q130 25 150 35L130 50Q115 45 108 30Z" fill="#8ab8dc" opacity=".7"/>
<ellipse cx="160" cy="18" rx="18" ry="9" fill="#7a3a90"/>
<ellipse cx="172" cy="36" rx="22" ry="11" fill="#f0c050" opacity=".8"/>
<ellipse cx="160" cy="58" rx="38" ry="18" fill="#d84418"/><ellipse cx="190" cy="52" rx="24" ry="15" fill="#ea7a20"/><ellipse cx="135" cy="65" rx="14" ry="8" fill="#e06820"/>
<ellipse cx="165" cy="92" rx="15" ry="8" fill="#c82858"/><ellipse cx="135" cy="80" rx="12" ry="7" fill="#e0a0a8" opacity=".8"/><ellipse cx="200" cy="72" rx="14" ry="6" fill="#f0b060" opacity=".5"/>
</g>
</g></svg>

<svg x="1016" y="953" width="224" height="33"><g clip-path="url(#tcs)">
<rect width="224" height="33" fill="#06202e"/>
<rect x="110" width="114" height="12" fill="#020408"/>
<path d="M0 5Q40 -2 90 20T200 25V33H0Z" fill="#0f5a74"/>
<path d="M0 15Q60 8 110 30M0 22Q60 15 120 33M20 4Q70 8 120 22" fill="none" stroke="#28a0c0"/>
<path d="M91.500 33V12.500H204.500V33" class="ph"/>
</g></svg>

<!-- THUMBS: WINDOW 3 -->
<svg x="1333" y="312" width="224" height="126"><g clip-path="url(#tc)">
<rect width="224" height="126" fill="#fdb124"/>
<g filter="url(#b1)">
<rect width="115" height="126" fill="url(#balls)"/>
<circle cx="65" cy="30" r="25" fill="#caa02c"/><circle cx="20" cy="40" r="28" fill="#96661c"/><circle cx="50" cy="75" r="28" fill="#b0801c"/><circle cx="88" cy="70" r="26" fill="#c49420"/><circle cx="88" cy="20" r="22" fill="#a87c1e"/><circle cx="15" cy="100" r="24" fill="#70501a"/><circle cx="70" cy="115" r="22" fill="#a07820"/>
</g>
<path d="M80 92Q92 102 104 90" fill="none" stroke="#222" stroke-width="1.200"/><path d="M38 20Q50 26 55 34M70 45Q80 38 85 42" fill="none" stroke="#2a1a0c" stroke-width="1.200"/>
<rect x="19.500" y="10.500" width="92" height="72" class="ph"/><rect x="19.500" y="82.500" width="92" height="35" class="ph"/>
<text x="20" y="77" font-family="Liberation Serif" font-size="9.500" class="w" textLength="73" lengthAdjust="spacingAndGlyphs">Click to add title</text>
<text x="20" y="88" font-size="3.800" class="w" textLength="47" lengthAdjust="spacingAndGlyphs">Click to add subtitle</text>
<rect x="4" y="104" width="22" height="18" fill="#000" opacity=".65"/><rect x="9" y="110" width="7" height="6" fill="none" stroke="#fff"/><path d="M16 111L19 110V116L16 115" fill="none" stroke="#fff"/>
</g></svg>

<svg x="1333" y="460" width="224" height="126"><g clip-path="url(#tc)">
<rect width="224" height="126" fill="#fff"/>
<rect width="109" height="126" fill="url(#sunset)"/>
<path d="M22 52L48 25 72 52H64V78H32V52Z" fill="#b78f94"/>
<rect x="34" y="52" width="28" height="26" fill="#d89aa0"/><circle cx="48" cy="60" r="8" fill="#f8d060"/>
<path d="M44 80Q65 70 90 82L109 100V126H70Q45 110 44 80Z" fill="#8e584c"/><circle cx="75" cy="86" r="4" fill="#f08030"/>
<rect x="112" y="3" width="109" height="120" fill="#e5e3e8"/>
<rect x="125.500" y="20.500" width="85" height="39" class="pd"/><rect x="128.500" y="90.500" width="79" height="24" class="pd"/>
<g font-family="Liberation Serif" font-size="6" fill="#888" text-anchor="middle">
<text x="167" y="39" textLength="58" lengthAdjust="spacing">CLICK TO EDIT</text><text x="167" y="47" textLength="57" lengthAdjust="spacing">MASTER TITLE</text><text x="167" y="56" textLength="23" lengthAdjust="spacing">STYLE</text>
</g>
<path d="M159 78.500H175" stroke="#333"/><circle cx="167" cy="78.500" r="1.500" fill="#333"/>
<text x="148" y="94" font-size="3" fill="#999" textLength="38" lengthAdjust="spacingAndGlyphs">Click to add subtitle</text>
</g></svg>

<svg x="1333" y="608" width="224" height="126"><g clip-path="url(#tc)">
<rect width="224" height="126" fill="#061058"/>
<circle cx="65" cy="10" r="22" fill="#0a2a98"/><circle cx="30" cy="85" r="26" fill="#082aa8"/><circle cx="85" cy="100" r="28" fill="#0838b0"/><circle cx="100" cy="40" r="14" fill="#0a2a80"/><circle cx="10" cy="40" r="16" fill="#0a1c80"/>
<circle cx="32" cy="15" r="6" fill="#28a8d8"/><circle cx="24" cy="29" r="7" fill="#a080f0"/><circle cx="70" cy="26" r="6" fill="#20a0d0"/><circle cx="87" cy="102" r="10" fill="#28b8e0"/><circle cx="20" cy="72" r="4" fill="#30c0e0"/><circle cx="8" cy="73" r="3" fill="#20a0d0"/><circle cx="55" cy="78" r="3.500" fill="#2090d0"/><circle cx="90" cy="60" r="3" fill="#30c0e0"/><circle cx="125" cy="55" r="3" fill="#30a0e0"/><circle cx="125" cy="5" r="4" fill="#8878e8"/><circle cx="157" cy="5" r="4" fill="#8878e0"/><circle cx="45" cy="60" r="2" fill="#30c0e0"/><circle cx="120" cy="75" r="2" fill="#30a0e0"/>
<path d="M224 5Q160 15 120 50Q100 90 145 126H224Z" fill="#151534"/>
<path d="M224 5Q160 15 118 45Q100 80 150 126" fill="none" stroke="#b060d0" stroke-width="1"/>
<rect x="139.500" y="43.500" width="72" height="40" class="ph"/><rect x="139.500" y="86.500" width="72" height="26" class="ph"/>
<text x="142" y="71" font-family="Liberation Serif" font-size="9.500" class="w" textLength="53" lengthAdjust="spacingAndGlyphs">Click to add</text>
<text x="142" y="82" font-family="Liberation Serif" font-size="9.500" class="w" textLength="18" lengthAdjust="spacingAndGlyphs">title</text>
<text x="142" y="109" font-size="4.500" fill="#b8b8d0" textLength="51" lengthAdjust="spacingAndGlyphs">Click to add subtitle</text>
</g></svg>

<svg x="1333" y="756" width="224" height="126"><g clip-path="url(#tc)">
<rect width="224" height="126" fill="#0a0714"/>
<g fill="none">
<ellipse cx="20" cy="-8" rx="35" ry="24" stroke="#d0a0e8" stroke-width="2"/>
<ellipse cx="20" cy="-8" rx="50" ry="30" stroke="#7040a8" stroke-width="4"/>
<ellipse cx="20" cy="-8" rx="70" ry="36" stroke="#b878d8" stroke-width="3"/>
<ellipse cx="20" cy="-8" rx="90" ry="42" stroke="#6838a0" stroke-width="5"/>
<ellipse cx="20" cy="-8" rx="110" ry="47" stroke="#d8a8e8" stroke-width="2"/>
<ellipse cx="20" cy="-8" rx="130" ry="52" stroke="#6030a0" stroke-width="5"/>
<ellipse cx="20" cy="-8" rx="155" ry="56" stroke="#c080e0" stroke-width="2" stroke-dasharray="30 6"/>
<ellipse cx="20" cy="-8" rx="180" ry="60" stroke="#5030a0" stroke-width="4"/>
<ellipse cx="20" cy="-8" rx="210" ry="64" stroke="#9060c8" stroke-width="2"/>
<ellipse cx="20" cy="-8" rx="240" ry="68" stroke="#402880" stroke-width="4"/>
<ellipse cx="20" cy="-8" rx="280" ry="72" stroke="#705098" stroke-width="1"/>
<path d="M0 76H224M0 115H224M0 122H224" stroke="#3a2858"/>
</g>
<rect x="8" y="80" width="207" height="31" fill="#000"/>
<rect x="10.500" y="81.500" width="204" height="20" class="ph"/><rect x="10.500" y="101.500" width="204" height="9" class="ph"/>
<text x="13" y="97" font-size="7" class="w" textLength="87" lengthAdjust="spacingAndGlyphs">CLICK TO ADD TITLE</text>
<text x="13" y="106" font-size="3" fill="#e03090" textLength="42" lengthAdjust="spacingAndGlyphs">CLICK TO ADD SUBTITLE</text>
</g></svg>

<svg x="1333" y="904" width="224" height="85"><g clip-path="url(#tcm)">
<rect width="224" height="85" fill="url(#teal)"/>
<path d="M0 15.500H156" stroke="#fff"/>
<rect x="206" y="23" width="1.500" height="1.500" fill="#eef"/><rect x="212" y="31" width="2" height="2" fill="#bdd"/><rect x="202" y="40" width="2" height="2" fill="#eef"/>
<path d="M17.500 85V41.500H136.500V85M137.500 85V65.500H206.500V85" class="ph"/>
<text x="20" y="89" font-weight="bold" font-size="13" class="w" textLength="107" lengthAdjust="spacingAndGlyphs">CLICK TO ADD</text>
</g></svg>

<!-- THUMBS: WINDOW 4 -->
<svg x="1620" y="265" width="224" height="126"><g clip-path="url(#tc)">
<rect width="224" height="126" fill="#120806"/>
<g filter="url(#b1)">
<rect x="72" y="5" width="130" height="85" fill="#4a1c08"/>
<rect x="95" y="12" width="100" height="68" fill="#9a4a10"/>
<ellipse cx="145" cy="48" rx="55" ry="42" fill="url(#fire)"/>
<path d="M100 68L118 58 128 42 138 38 148 14 153 10 158 38 168 28 172 55 165 75H105Z" fill="#fff0d8"/>
<path d="M172 30L190 55 180 75H165Z" fill="#f29018"/>
</g>
<path d="M0 85Q80 90 150 82L224 80V126H0Z" fill="#1a0c06"/>
<rect x="0" y="100" width="224" height="26" fill="#26140a"/><rect x="45" y="45" width="40" height="45" fill="#20120c"/>
<ellipse cx="37" cy="66" rx="12" ry="8" fill="#553210"/>
<path d="M18 19.500H37" stroke="#ddd" stroke-width=".6"/>
<rect x="16.500" y="26.500" width="107" height="49" class="ph"/><rect x="16.500" y="85.500" width="110" height="25" class="ph"/>
<text x="19" y="35" font-size="7" fill="#ddd" textLength="65" lengthAdjust="spacingAndGlyphs">Click to add title</text>
<text x="19" y="106" font-size="3.500" fill="#ddd" textLength="60" lengthAdjust="spacing">CLICK TO ADD SUBTITLE</text>
<rect x="9" y="112" width="7" height="6" fill="none" stroke="#fff"/><path d="M16 113L19 112V118L16 117" fill="none" stroke="#fff"/>
</g></svg>

<svg x="1620" y="413" width="224" height="126"><g clip-path="url(#tc)">
<rect width="224" height="126" fill="#fbfbfb"/>
<path d="M14 0H224L220 108 10 100Z" fill="#c6c6c6" stroke="#000" stroke-width="3"/>
<g filter="url(#b1)">
<path d="M35 2L70 30 20 50ZM70 30L130 2H70ZM130 2L170 45 100 60ZM170 45L218 5V70ZM14 98L50 60 100 60 90 100ZM100 60L150 104 170 45Z" fill="#b6b6b6"/>
<path d="M50 60L70 30 100 60ZM170 45L218 70 160 105ZM70 30L130 2 100 60Z" fill="#d4d4d4"/>
</g>
<rect x="23.500" y="53.500" width="118" height="61" class="pd"/><rect x="139.500" y="108.500" width="68" height="14" class="pd" fill="#fbfbfb"/>
<rect x="24" y="98" width="98" height="14" fill="#ff0"/>
<text x="25" y="109" font-weight="bold" font-style="italic" font-size="11" fill="#000" textLength="96" lengthAdjust="spacingAndGlyphs">Click to add title</text>
<text x="161" y="118" font-size="3.500" fill="#888" textLength="43" lengthAdjust="spacingAndGlyphs">Click to add subtitle</text>
<path d="M3 120H10M6.500 116V124" stroke="#000"/>
</g></svg>

<svg x="1620" y="561" width="224" height="126"><g clip-path="url(#tc)">
<rect width="224" height="126" fill="#e5e9e6"/>
<rect x="125" width="99" height="126" fill="url(#paint)"/>
<path d="M125 0H175L140 30 125 40ZM180 0H224V30Z" fill="#c8d080" opacity=".6"/>
<path d="M125 118L224 95V126H125Z" fill="#a82840"/>
<rect x="18" width="2" height="126" fill="#43243a"/><rect x="124" width="1.500" height="126" fill="#43243a"/>
<rect y="15" width="18" height="47" fill="#de3cae"/><rect x="18" y="15" width="107" height="47" fill="#43243a"/>
<rect x="30.500" y="19.500" width="88" height="41" class="ph"/><rect x="30.500" y="68.500" width="89" height="32" class="pd"/>
<text x="32" y="35" font-size="9" fill="#eee" textLength="78" lengthAdjust="spacing">CLICK TO ADD</text>
<text x="32" y="51" font-size="9" fill="#eee" textLength="29" lengthAdjust="spacing">TITLE</text>
<text x="32" y="75" font-size="5" fill="#777" textLength="61" lengthAdjust="spacingAndGlyphs">Click to add subtitle</text>
</g></svg>

<svg x="1620" y="709" width="224" height="126"><g clip-path="url(#tc)">
<rect width="224" height="126" fill="#8e8f93"/>
<use href="#ring" transform="translate(40,15) scale(1.200,.55)"/>
<use href="#ring" transform="translate(195,40) scale(1,.55)"/>
<use href="#ring" transform="translate(55,122) scale(1.700,.95)"/>
<path d="M190 15Q200 -5 224 0V22Q200 30 190 15Z" fill="#c0681c"/><path d="M190 40Q205 30 213 40Q212 58 200 62Q188 55 190 40Z" fill="#a86c44"/><path d="M205 68Q214 60 224 62V88H210Q202 80 205 68Z" fill="#c0681c"/>
<rect x="58.500" y="13.500" width="108" height="49" class="ph"/><rect x="58.500" y="65.500" width="108" height="48" class="ph"/>
<text x="112" y="57" text-anchor="middle" font-size="9" class="w" textLength="86" lengthAdjust="spacingAndGlyphs">Click to add title</text>
<text x="112" y="69" text-anchor="middle" font-size="4" class="w" textLength="46" lengthAdjust="spacingAndGlyphs">Click to add subtitle</text>
</g></svg>

<svg x="1620" y="857" width="224" height="126"><g clip-path="url(#tc)">
<rect width="224" height="126" fill="#4e5660"/>
<g filter="url(#b3)"><ellipse cx="190" cy="50" rx="40" ry="25" fill="#465059"/><ellipse cx="205" cy="90" rx="30" ry="20" fill="#3e4a58"/></g>
<path d="M10 9.500H214M10 118.500H214" stroke="#fff" stroke-width=".8"/>
<rect x="9.500" y="12.500" width="128" height="53" class="ph"/><rect x="122.500" y="78.500" width="92" height="37" class="ph"/>
<text x="11" y="32" font-size="14" fill="#eee" textLength="95" lengthAdjust="spacingAndGlyphs">Click to add</text>
<text x="11" y="54" font-size="14" fill="#eee" textLength="33" lengthAdjust="spacingAndGlyphs">title</text>
<text x="163" y="111" font-size="4.500" class="w" textLength="48" lengthAdjust="spacingAndGlyphs">Click to add subtitle</text>
</g></svg>
</svg>
</body></html>
